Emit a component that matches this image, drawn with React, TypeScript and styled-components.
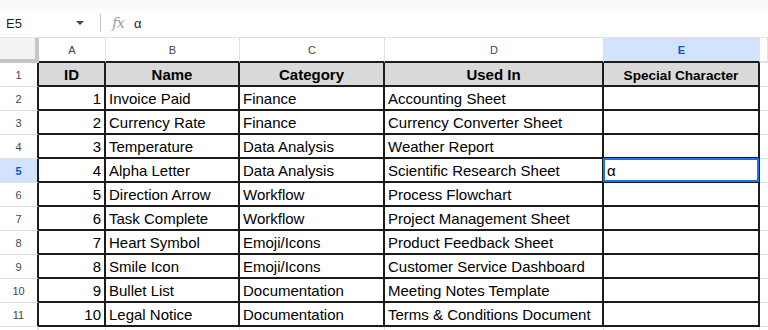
import styled, { createGlobalStyle, css } from "styled-components";

const GlobalStyle = createGlobalStyle`
  html, body {
    margin: 0;
    padding: 0;
    background: #ffffff;
    overflow: hidden;
  }
  body {
    font-family: "Liberation Sans", Arial, sans-serif;
    color: #000;
  }
`;

const Page = styled.div`
  width: 768px;
  height: 330px;
  overflow: hidden;
`;

const TopStrip = styled.div`
  height: 9px;
  background: #f8f9fa;
`;

const FormulaBar = styled.div`
  height: 28px;
  display: flex;
  align-items: center;
  border-bottom: 1px solid #e1e3e1;
  font-size: 13px;
  color: #1f1f1f;
`;

const NameBox = styled.div`
  width: 92px;
  display: flex;
  align-items: center;
  justify-content: space-between;
  padding: 0 8px 0 6px;
  box-sizing: border-box;
`;

const Caret = styled.span`
  width: 0;
  height: 0;
  border-left: 4px solid transparent;
  border-right: 4px solid transparent;
  border-top: 4px solid #444746;
`;

const Divider = styled.div`
  width: 1px;
  height: 18px;
  background: #c4c7c5;
  margin: 0 11px 0 8px;
`;

const Fx = styled.span`
  font-family: "DejaVu Serif", "Liberation Serif", serif;
  font-style: italic;
  font-size: 15px;
  color: #a0a0a0;
  margin-right: 10px;
  letter-spacing: -1px;
`;

const Grid = styled.div`
  display: grid;
  grid-template-columns: 39px 67px 134px 145px 219px 156px 1fr;
  grid-template-rows: 25px;
  grid-auto-rows: 24px;
`;

const Corner = styled.div`
  background: #f1f3f4;
  border-right: 4px solid #c4c7c5;
  border-bottom: 4px solid #c4c7c5;
  box-sizing: border-box;
`;

const ColHead = styled.div<{ $active?: boolean; $dark?: boolean }>`
  display: flex;
  align-items: center;
  justify-content: center;
  font-size: 11px;
  color: #444746;
  border-right: 1px solid #e1e3e1;
  border-bottom: 2px solid ${(p) => (p.$dark ? "#1c1c1c" : "#e1e3e1")};
  box-sizing: border-box;
  background: #ffffff;
  ${(p) =>
    p.$active &&
    css`
      background: #d3e3fd;
      color: #0b57d0;
      font-weight: bold;
    `}
`;

const RowHead = styled.div<{ $active?: boolean; $dark?: boolean }>`
  display: flex;
  align-items: center;
  justify-content: center;
  font-size: 11px;
  color: #444746;
  border-right: 2px solid ${(p) => (p.$dark ? "#1c1c1c" : "#e1e3e1")};
  border-bottom: 1px solid #e1e3e1;
  box-sizing: border-box;
  ${(p) =>
    p.$active &&
    css`
      background: #d3e3fd;
      color: #0b57d0;
      font-weight: bold;
    `}
`;

const Cell = styled.div<{
  $head?: boolean;
  $num?: boolean;
  $small?: boolean;
  $selected?: boolean;
}>`
  position: relative;
  display: flex;
  align-items: flex-end;
  justify-content: ${(p) =>
    p.$head ? "center" : p.$num ? "flex-end" : "flex-start"};
  padding: 0 3px 2px 3px;
  box-sizing: border-box;
  font-size: ${(p) => (p.$small ? "13.6px" : "15px")};
  font-weight: ${(p) => (p.$head ? "bold" : "normal")};
  background: ${(p) => (p.$head ? "#d9d9d9" : "#ffffff")};
  border-right: 2px solid #1c1c1c;
  border-bottom: 2px solid #1c1c1c;
  white-space: nowrap;
  ${(p) =>
    p.$selected &&
    css`
      &::after {
        content: "";
        position: absolute;
        left: -1px;
        top: -1px;
        right: -1px;
        bottom: -1px;
        border: 2px solid #1a73e8;
        pointer-events: none;
      }
    `}
`;

const Blank = styled.div`
  border-bottom: 1px solid #e1e3e1;
  box-sizing: border-box;
`;

const columns = ["A", "B", "C", "D", "E"];

const rows = [
  [1, "Invoice Paid", "Finance", "Accounting Sheet", ""],
  [2, "Currency Rate", "Finance", "Currency Converter Sheet", ""],
  [3, "Temperature", "Data Analysis", "Weather Report", ""],
  [4, "Alpha Letter", "Data Analysis", "Scientific Research Sheet", "α"],
  [5, "Direction Arrow", "Workflow", "Process Flowchart", ""],
  [6, "Task Complete", "Workflow", "Project Management Sheet", ""],
  [7, "Heart Symbol", "Emoji/Icons", "Product Feedback Sheet", ""],
  [8, "Smile Icon", "Emoji/Icons", "Customer Service Dashboard", ""],
  [9, "Bullet List", "Documentation", "Meeting Notes Template", ""],
  [10, "Legal Notice", "Documentation", "Terms & Conditions Document", ""],
];

export default function App() {
  return (
    <Page>
      <GlobalStyle />
      <TopStrip />
      <FormulaBar>
        <NameBox>
          <span>E5</span>
          <Caret />
        </NameBox>
        <Divider />
        <Fx>fx</Fx>
        <span>α</span>
      </FormulaBar>
      <Grid>
        <Corner />
        {columns.map((c) => (
          <ColHead key={c} $dark $active={c === "E"}>
            {c}
          </ColHead>
        ))}
        <ColHead />

        <RowHead $dark>1</RowHead>
        <Cell $head>ID</Cell>
        <Cell $head>Name</Cell>
        <Cell $head>Category</Cell>
        <Cell $head>Used In</Cell>
        <Cell $head $small>
          Special Character
        </Cell>
        <Blank />

        {rows.map((r, i) => (
          <>
            <RowHead key={`h${i}`} $dark $active={i === 3}>
              {i + 2}
            </RowHead>
            <Cell key={`a${i}`} $num>
              {r[0]}
            </Cell>
            <Cell key={`b${i}`}>{r[1]}</Cell>
            <Cell key={`c${i}`}>{r[2]}</Cell>
            <Cell key={`d${i}`}>{r[3]}</Cell>
            <Cell key={`e${i}`} $selected={i === 3}>
              {r[4]}
            </Cell>
            <Blank key={`f${i}`} />
          </>
        ))}

        <RowHead />
        {columns.map((c) => (
          <ColHead key={`x${c}`} />
        ))}
        <Blank />
      </Grid>
    </Page>
  );
}
